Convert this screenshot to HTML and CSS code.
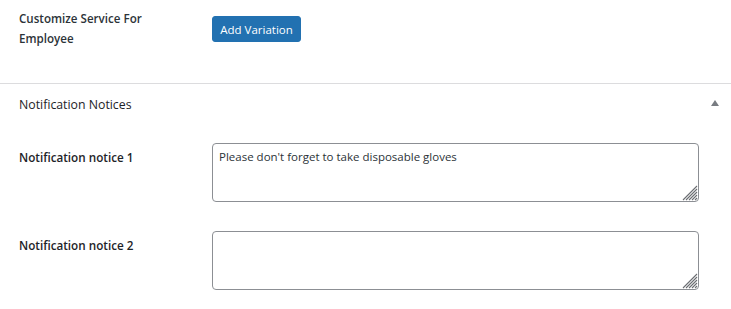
FILE: index.html
```html
<!DOCTYPE html>
<html lang="en">
<head>
    <meta charset="UTF-8">
    <meta name="viewport" content="width=device-width, initial-scale=1.0">
    <title>Service Settings</title>
    <link rel="stylesheet" href="styles.css">
</head>
<body>
    <!-- Customize row -->
    <div class="top-row">
        <div class="row-label">Customize Service For Employee</div>
        <div>
            <button type="button" class="add-btn">Add Variation</button>
        </div>
    </div>

    <!-- Notification notices panel -->
    <div class="panel">
        <div class="panel-head">
            <span class="panel-title">Notification Notices</span>
            <span class="toggle-arrow"></span>
        </div>
        <div class="field-row">
            <label class="row-label" for="notice1">Notification notice 1</label>
            <div class="input-wrap">
                <textarea id="notice1" class="notice-input">Please don't forget to take disposable gloves</textarea>
                <svg class="grip" width="16" height="16" viewBox="0 0 16 16">
                    <path d="M1 15L15 1M4 15L15 4M7 15L15 7M10 15L15 10M13 15L15 13" stroke="#6b6e72" stroke-width="1.1" fill="none"/>
                </svg>
            </div>
        </div>
        <div class="field-row">
            <label class="row-label" for="notice2">Notification notice 2</label>
            <div class="input-wrap">
                <textarea id="notice2" class="notice-input"></textarea>
                <svg class="grip" width="16" height="16" viewBox="0 0 16 16">
                    <path d="M1 15L15 1M4 15L15 4M7 15L15 7M10 15L15 10M13 15L15 13" stroke="#6b6e72" stroke-width="1.1" fill="none"/>
                </svg>
            </div>
        </div>
    </div>
</body>
</html>
```

FILE: styles.css
```css
* {
    margin: 0;
    padding: 0;
    box-sizing: border-box;
}

body {
    background: #fff;
    color: #1d2327;
    font-family: 'Open Sans', 'Noto Sans', sans-serif;
    font-size: 12px;
}

.top-row {
    display: grid;
    grid-template-columns: 193px auto;
    height: 84px;
    padding: 9px 0 0 19px;
    border-bottom: 1px solid #dcdcde;
}

.row-label {
    font-weight: 600;
    line-height: 20px;
    font-size: 11.6px;
    width: 160px;
    color: #2c3338;
}

.add-btn {
    margin-top: 7px;
    height: 26px;
    width: 89px;
    background-color: #2271b1;
    border: 1px solid #2271b1;
    border-radius: 3px;
    color: #fff;
    font-family: inherit;
    font-size: 11.5px;
    cursor: pointer;
}

.panel-head {
    display: flex;
    justify-content: space-between;
    align-items: center;
    height: 40px;
    padding: 0 12px 0 19px;
}

.panel-title {
    font-size: 12.3px;
}

.toggle-arrow {
    width: 0;
    height: 0;
    border-left: 4px solid transparent;
    border-right: 4px solid transparent;
    border-bottom: 6px solid #787c82;
    margin-bottom: 3px;
}

.field-row {
    display: grid;
    grid-template-columns: 193px 487px;
    padding-left: 19px;
    margin-top: 19px;
}

.field-row + .field-row {
    margin-top: 29px;
}

.field-row .row-label {
    margin-top: 4px;
    width: auto;
    font-size: 11.7px;
    color: #1d2327;
}

.input-wrap {
    position: relative;
    height: 59px;
}

.notice-input {
    display: block;
    width: 487px;
    height: 59px;
    border: 1px solid #8c8f94;
    border-radius: 4px;
    padding: 4px 6px;
    font-family: inherit;
    font-size: 11.5px;
    line-height: 18px;
    color: #2c3338;
    resize: none;
}

.grip {
    position: absolute;
    right: 1px;
    bottom: 1px;
}
```
